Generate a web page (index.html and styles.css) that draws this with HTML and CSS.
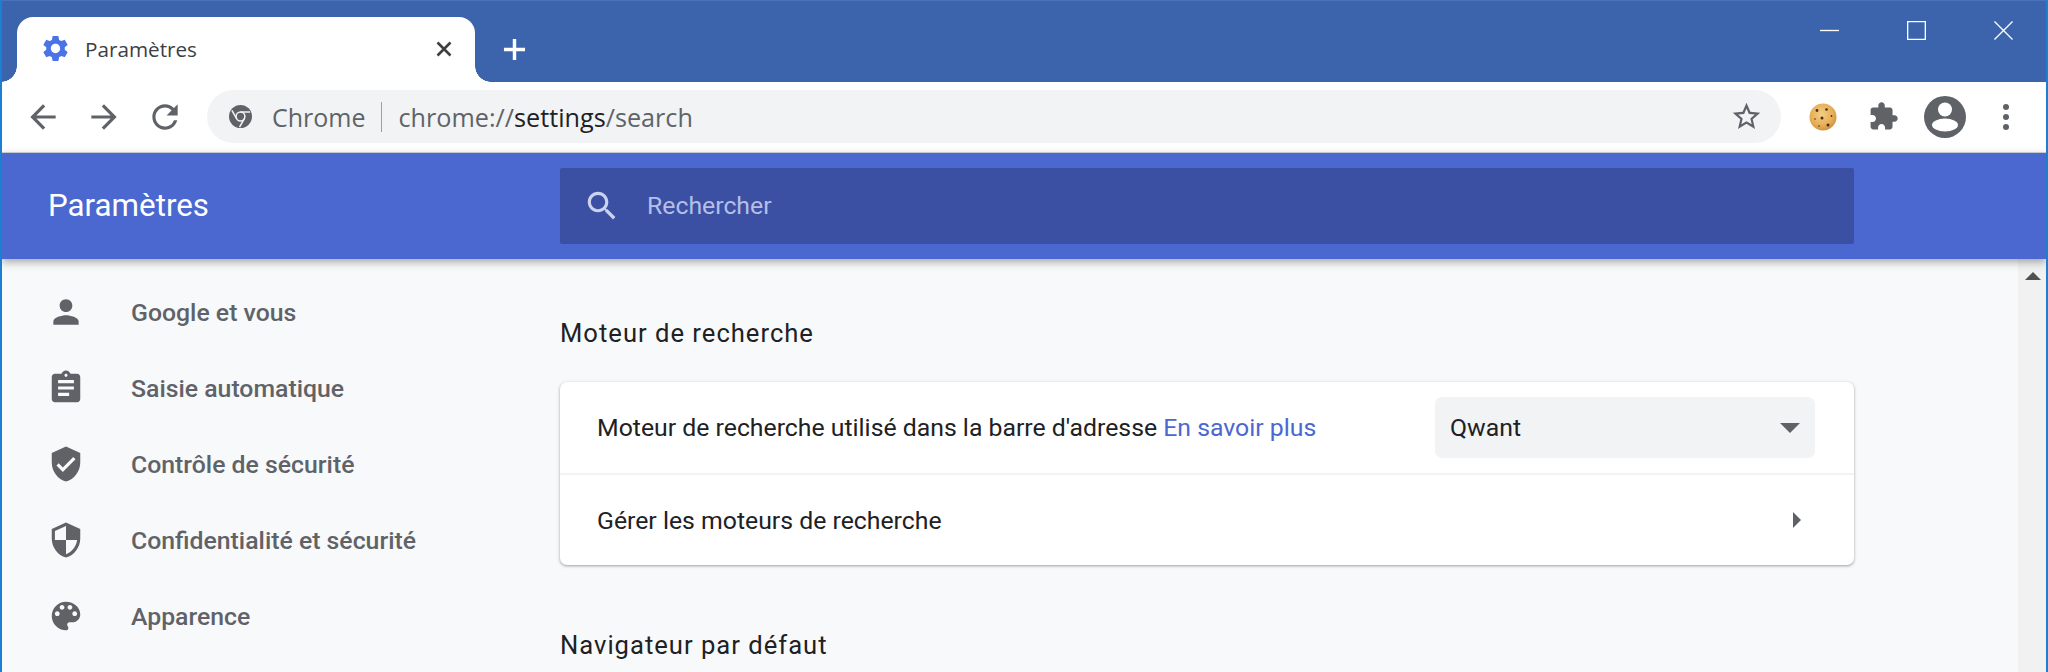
FILE: index.html
```html
<!DOCTYPE html>
<html lang="fr">
<head>
<meta charset="utf-8">
<title>Paramètres</title>
<link rel="stylesheet" href="styles.css">
</head>
<body>
<div class="window">
  <div class="tabstrip">
    <div class="tab">
      <svg class="tab-icon" viewBox="0 0 24 24"><path d="M19.14 12.94c.04-.3.06-.61.06-.94 0-.32-.02-.64-.07-.94l2.03-1.58c.18-.14.23-.41.12-.61l-1.92-3.32c-.12-.22-.37-.29-.59-.22l-2.39.96c-.5-.38-1.03-.7-1.62-.94l-.36-2.54c-.04-.24-.24-.41-.48-.41h-3.84c-.24 0-.43.17-.47.41l-.36 2.54c-.59.24-1.13.57-1.62.94l-2.39-.96c-.22-.08-.47 0-.59.22L2.74 8.87c-.12.21-.08.47.12.61l2.03 1.58c-.05.3-.09.63-.09.94s.02.64.07.94l-2.03 1.58c-.18.14-.23.41-.12.61l1.92 3.32c.12.22.37.29.59.22l2.39-.96c.5.38 1.03.7 1.62.94l.36 2.54c.05.24.24.41.48.41h3.84c.24 0 .44-.17.47-.41l.36-2.54c.59-.24 1.13-.56 1.62-.94l2.39.96c.22.08.47 0 .59-.22l1.92-3.32c.12-.22.07-.47-.12-.61l-2.01-1.58zM12 15.6c-1.98 0-3.6-1.62-3.6-3.6s1.62-3.6 3.6-3.6 3.6 1.62 3.6 3.6-1.62 3.6-3.6 3.6z"/></svg>
      <span class="tab-title">Paramètres</span>
      <svg class="tab-close" viewBox="0 0 16 16"><path d="M1.5 1.5l13 13M14.5 1.5l-13 13"/></svg>
    </div>
    <svg class="new-tab" viewBox="0 0 24 24"><path d="M12 1v22M1 12h22"/></svg>
    <div class="caption">
      <svg class="cap-btn" viewBox="0 0 20 20"><path d="M0 10h20"/></svg>
      <svg class="cap-btn" viewBox="0 0 20 20"><path d="M.7.7h18.6v18.6H.7z"/></svg>
      <svg class="cap-btn" viewBox="0 0 20 20"><path d="M.5.5l19 19M19.5.5l-19 19"/></svg>
    </div>
  </div>

  <div class="toolbar">
    <svg class="nav-icon" viewBox="0 0 24 24"><path d="M20 11H7.83l5.59-5.59L12 4l-8 8 8 8 1.41-1.41L7.83 13H20v-2z"/></svg>
    <svg class="nav-icon" viewBox="0 0 24 24"><path d="M4 11h12.17l-5.59-5.59L12 4l8 8-8 8-1.41-1.41L16.17 13H4v-2z"/></svg>
    <svg class="nav-icon" viewBox="0 0 24 24"><path d="M17.65 6.35C16.2 4.9 14.21 4 12 4c-4.42 0-7.99 3.58-7.99 8s3.57 8 7.99 8c3.73 0 6.84-2.55 7.73-6h-2.08c-.82 2.33-3.04 4-5.65 4-3.31 0-6-2.69-6-6s2.69-6 6-6c1.66 0 3.14.69 4.22 1.78L13 11h7V4l-2.35 2.35z"/></svg>
    <div class="omnibox">
      <svg class="chrome-icon" viewBox="0 0 24 24"><circle cx="12" cy="12" r="12" class="cr-bg"/><circle cx="12" cy="12" r="4.6" class="cr-ring"/><path class="cr-ring" d="M12 7.4h10M16 14.3l-5 8.7M8 14.3L3 5.6"/></svg>
      <span class="omni-chip">Chrome</span>
      <span class="omni-sep"></span>
      <span class="omni-url">chrome://<b>settings</b>/search</span>
      <svg class="star" viewBox="0 0 24 24"><path d="M22 9.24l-7.19-.62L12 2 9.19 8.63 2 9.24l5.46 4.73L5.82 21 12 17.27 18.18 21l-1.63-7.03L22 9.24zM12 15.4l-3.76 2.27 1-4.28-3.32-2.88 4.38-.38L12 6.1l1.71 4.04 4.38.38-3.32 2.88 1 4.28L12 15.4z"/></svg>
    </div>
    <div class="tools">
      <svg class="cookie" viewBox="0 0 28 28">
        <defs><radialGradient id="ck" cx="45%" cy="40%" r="60%"><stop offset="0" stop-color="#f2cf86"/><stop offset="0.7" stop-color="#e6ae55"/><stop offset="1" stop-color="#cf9340"/></radialGradient></defs>
        <circle cx="14" cy="14" r="13.5" fill="url(#ck)"/>
        <g class="chips"><circle cx="8" cy="7.5" r="1.4"/><circle cx="17.5" cy="6.5" r="1.3"/><circle cx="13" cy="15" r="1.5"/><circle cx="19" cy="22" r="1.5"/><circle cx="22.5" cy="13" r=".9"/><circle cx="6" cy="16" r=".8"/><circle cx="10" cy="23" r=".8"/></g>
      </svg>
      <svg class="puzzle" viewBox="0 0 24 24"><path d="M20.5 11H19V7c0-1.1-.9-2-2-2h-4V3.5C13 2.12 11.88 1 10.5 1S8 2.12 8 3.5V5H4c-1.1 0-1.99.9-1.99 2v3.8H3.5c1.49 0 2.7 1.21 2.7 2.7s-1.21 2.7-2.7 2.7H2V20c0 1.1.9 2 2 2h3.8v-1.5c0-1.49 1.21-2.7 2.7-2.7 1.49 0 2.7 1.21 2.7 2.7V22H17c1.1 0 2-.9 2-2v-4h1.5c1.38 0 2.5-1.12 2.5-2.5S21.88 11 20.5 11z"/></svg>
      <svg class="avatar" viewBox="0 0 42 42"><circle class="av-bg" cx="21" cy="21" r="21"/><circle class="av-fg" cx="21" cy="13.5" r="7"/><ellipse class="av-fg" cx="21" cy="29" rx="13" ry="6.5"/></svg>
      <svg class="dots" viewBox="0 0 6 26"><circle cx="3" cy="3" r="3"/><circle cx="3" cy="13" r="3"/><circle cx="3" cy="23" r="3"/></svg>
    </div>
  </div>

  <header class="settings-header">
    <div class="header-title">Paramètres</div>
    <div class="search">
      <svg class="search-icon" viewBox="0 0 24 24"><path d="M15.5 14h-.79l-.28-.27C15.41 12.59 16 11.11 16 9.5 16 5.91 13.09 3 9.5 3S3 5.91 3 9.5 5.91 16 9.5 16c1.61 0 3.09-.59 4.23-1.57l.27.28v.79l5 4.99L20.49 19l-4.99-5zm-6 0C7.01 14 5 11.99 5 9.5S7.01 5 9.5 5 14 7.01 14 9.5 11.99 14 9.5 14z"/></svg>
      <span class="search-text">Rechercher</span>
    </div>
  </header>

  <div class="page">
    <nav class="sidebar">
      <div class="nav-item"><svg class="side-icon" viewBox="0 0 24 24"><path d="M12 12c2.21 0 4-1.79 4-4s-1.79-4-4-4-4 1.79-4 4 1.79 4 4 4zm0 2c-2.67 0-8 1.34-8 4v2h16v-2c0-2.66-5.33-4-8-4z"/></svg><span>Google et vous</span></div>
      <div class="nav-item"><svg class="side-icon" viewBox="0 0 24 24"><path d="M19 3h-4.18C14.4 1.84 13.3 1 12 1c-1.3 0-2.4.84-2.82 2H5c-1.1 0-2 .9-2 2v14c0 1.1.9 2 2 2h14c1.1 0 2-.9 2-2V5c0-1.1-.9-2-2-2zm-7 0c.55 0 1 .45 1 1s-.45 1-1 1-1-.45-1-1 .45-1 1-1zm2 14H7v-2h7v2zm3-4H7v-2h10v2zm0-4H7V7h10v2z"/></svg><span>Saisie automatique</span></div>
      <div class="nav-item"><svg class="side-icon" viewBox="0 0 24 24"><path d="M12 1L3 5v6c0 5.55 3.84 10.74 9 12 5.16-1.26 9-6.45 9-12V5l-9-4zm-2 16l-4-4 1.41-1.41L10 14.17l6.59-6.59L18 9l-8 8z"/></svg><span>Contrôle de sécurité</span></div>
      <div class="nav-item"><svg class="side-icon" viewBox="0 0 24 24"><path d="M12 1L3 5v6c0 5.55 3.84 10.74 9 12 5.16-1.26 9-6.45 9-12V5l-9-4zm0 10.99h7c-.53 4.12-3.28 7.79-7 8.94V12H5V6.3l7-3.11v8.8z"/></svg><span>Confidentialité et sécurité</span></div>
      <div class="nav-item"><svg class="side-icon" viewBox="0 0 24 24"><path d="M12 3c-4.97 0-9 4.03-9 9s4.03 9 9 9c.83 0 1.5-.67 1.5-1.5 0-.39-.15-.74-.39-1.01-.23-.26-.38-.61-.38-.99 0-.83.67-1.5 1.5-1.5H16c2.76 0 5-2.24 5-5 0-4.42-4.03-8-9-8zm-5.5 9c-.83 0-1.5-.67-1.5-1.5S5.67 9 6.5 9 8 9.67 8 10.5 7.33 12 6.5 12zm3-4C8.67 8 8 7.33 8 6.5S8.67 5 9.5 5s1.5.67 1.5 1.5S10.33 8 9.5 8zm5 0c-.83 0-1.5-.67-1.5-1.5S13.67 5 14.5 5s1.5.67 1.5 1.5S15.33 8 14.5 8zm3 4c-.83 0-1.5-.67-1.5-1.5S16.67 9 17.5 9s1.5.67 1.5 1.5-.67 1.5-1.5 1.5z"/></svg><span>Apparence</span></div>
    </nav>
    <main class="content">
      <h2 class="section-title">Moteur de recherche</h2>
      <section class="card">
        <div class="row row-first">
          <div class="row-label">Moteur de recherche utilisé dans la barre d'adresse <a class="link">En savoir plus</a></div>
          <div class="select"><span>Qwant</span><span class="select-arrow"></span></div>
        </div>
        <div class="row row-second">
          <div class="row-label">Gérer les moteurs de recherche</div>
          <span class="sub-arrow"></span>
        </div>
      </section>
      <h2 class="section-title section-next">Navigateur par défaut</h2>
    </main>
    <div class="scrollbar"><span class="scroll-up"></span></div>
  </div>
</div>
</body>
</html>
```
FILE: styles.css
```css
* { box-sizing: border-box; }
html, body { margin: 0; height: 672px; overflow: hidden; }
body { font-family: Roboto, sans-serif; background: #f8f9fa; }
.window {
  width: 2048px; height: 672px; display: flex; flex-direction: column;
  border-left: 2px solid #1b7fd4; border-right: 2px solid #1b7fd4; overflow: hidden;
}

/* title strip */
.tabstrip {
  height: 82px; flex: none; background: #3b64ad; display: flex; align-items: flex-start;
  padding: 16px 0 0 15px; border-top: 1px solid #4a72b6; position: relative;
}
.tab {
  width: 458px; height: 65px; background: #fff; border-radius: 16px 16px 0 0;
  display: flex; align-items: center; padding: 0 0 2px 23px; position: relative;
}
.tab::before, .tab::after {
  content: ""; position: absolute; bottom: 0; width: 16px; height: 16px;
}
.tab::before { left: -16px; background: radial-gradient(circle at 0 0, #3b64ad 15.5px, #fff 16px); }
.tab::after { right: -16px; background: radial-gradient(circle at 100% 0, #3b64ad 15.5px, #fff 16px); }
.tab-icon { width: 31px; height: 31px; fill: #4a74e6; flex: none; }
.tab-title { margin-left: 14px; font: 400 20.7px "Open Sans", sans-serif; color: #3c4043; flex: 1; }
.tab-close { width: 16px; height: 16px; margin-right: 23px; fill: none; stroke: #3c4043; stroke-width: 2.6; }
.new-tab { width: 23px; height: 23px; margin: 21px 0 0 28px; fill: none; stroke: #fff; stroke-width: 3.6; }
.caption { margin-left: auto; display: flex; gap: 68px; padding: 4px 33px 0 0; }
.cap-btn { width: 19px; height: 19px; fill: none; stroke: #fff; stroke-width: 1.4; }

/* toolbar */
.toolbar {
  height: 71px; flex: none; background: #fff; display: flex; align-items: center;
  padding: 0 0 1px 22px; border-bottom: 1px solid #d5d8dd;
}
.nav-icon { width: 38px; height: 38px; fill: #5f6368; flex: none; margin-right: 23px; }
.omnibox {
  width: 1574px; height: 53px; background: #f1f3f4; border-radius: 27px; flex: none;
  display: flex; align-items: center; padding: 0 18px 0 22px;
}
.chrome-icon { width: 23px; height: 23px; flex: none; }
.cr-bg { fill: #5f6368; }
.cr-ring { fill: none; stroke: #f1f3f4; stroke-width: 1.6; }
.omni-chip { margin-left: 20px; font: 400 25px "Open Sans", sans-serif; color: #5f6368; }
.omni-sep { width: 1px; height: 30px; background: #9aa0a6; margin: 0 17px 0 15px; flex: none; }
.omni-url { font: 400 25.2px "Open Sans", sans-serif; color: #5f6368; flex: 1; }
.omni-url b { font-weight: 400; color: #202124; }
.star { width: 33px; height: 33px; fill: #5f6368; flex: none; }
.tools { flex: none; display: flex; align-items: center; margin-left: 27px; }
.cookie { width: 28px; height: 28px; margin-left: 1px; flex: none; }
.chips { fill: #4b2f18; }
.puzzle { width: 31px; height: 31px; fill: #5f6368; margin-left: 31px; flex: none; }
.avatar { width: 42px; height: 42px; margin-left: 25px; flex: none; }
.av-bg { fill: #5f6368; }
.av-fg { fill: #fff; }
.dots { width: 6px; height: 26px; fill: #5f6368; margin-left: 37px; flex: none; }

/* settings header */
.settings-header {
  height: 106px; flex: none; background: #4b68d0; display: flex; align-items: center;
  box-shadow: 0 3px 8px rgba(60,64,67,.45); position: relative; z-index: 2;
}
.header-title { width: 558px; padding: 0 0 2px 46px; font-size: 31.3px; color: #fff; flex: none; }
.search {
  width: 1294px; height: 76px; background: #3b50a2; border-radius: 2px; display: flex; align-items: center; padding-left: 23px;
}
.search-icon { width: 38px; height: 38px; fill: #cad2f0; flex: none; }
.search-text { margin: 0 0 2px 26px; font-size: 24.8px; color: #b4bfe8; }

/* page */
.page { flex: 1; display: flex; min-height: 0; background: #f8f9fa; }
.sidebar { width: 558px; flex: none; padding-top: 15px; }
.nav-item { height: 76px; display: flex; align-items: center; padding-left: 45px; font-size: 24.8px; font-weight: 500; color: #5f6368; }
.side-icon { width: 38px; height: 38px; fill: #5f6368; flex: none; margin-right: 46px; }
.content { width: 1294px; flex: none; padding-top: 59px; }
.section-title { margin: 0; height: 30px; line-height: 30px; font-size: 25.6px; font-weight: 400; letter-spacing: 1px; color: #202124; }
.section-next { margin-top: 65px; }
.card {
  margin-top: 34px; background: #fff; border-radius: 7px;
  box-shadow: 0 1px 3px 1px rgba(60,64,67,.15), 0 1px 2px rgba(60,64,67,.3);
}
.row { display: flex; align-items: center; justify-content: space-between; padding: 0 39px 0 37px; }
.row-first { height: 93px; border-bottom: 2px solid #f1f3f4; }
.row-second { height: 90px; }
.row-label { font-size: 24.8px; color: #202124; }
.link { color: #4b68d0; }
.select {
  width: 380px; height: 61px; background: #f1f3f4; border-radius: 7px; display: flex; align-items: center;
  justify-content: space-between; padding: 0 15px; font-size: 24.8px; color: #202124;
}
.select-arrow { width: 0; height: 0; border-left: 10px solid transparent; border-right: 10px solid transparent; border-top: 10px solid #5f6368; }
.sub-arrow { width: 0; height: 0; border-top: 8px solid transparent; border-bottom: 8px solid transparent; border-left: 8px solid #5f6368; margin-right: 14px; }
.scrollbar { margin-left: 164px; width: 30px; background: #f1f1f1; flex: none; display: flex; justify-content: center; padding-top: 13px; }
.scroll-up { width: 0; height: 0; border-left: 8px solid transparent; border-right: 8px solid transparent; border-bottom: 8px solid #505050; }
```
